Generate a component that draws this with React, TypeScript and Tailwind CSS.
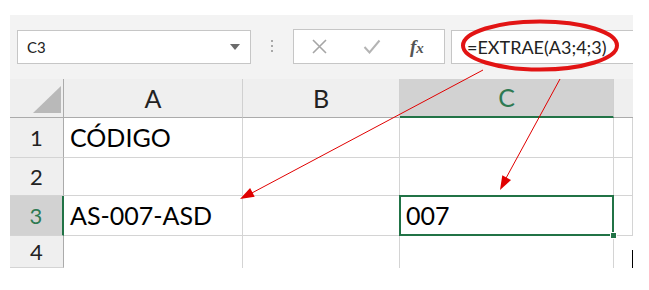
import React from "react";

const line = "border-[#d4d4d4]";

function Cell({ children, className = "" }: { children?: React.ReactNode; className?: string }) {
  return (
    <div className={`border-r border-b ${line} bg-white flex items-center pl-[6px] text-[25px] text-black leading-none ${className}`}>
      {children}
    </div>
  );
}

function RowHead({ n, active = false }: { n: number; active?: boolean }) {
  return (
    <div
      className={`flex items-center justify-center text-[22px] leading-none border-b border-[#d4d4d4] ${
        active
          ? "bg-[#d2d2d2] text-[#2e7a52] border-r-2 border-r-[#217346]"
          : "bg-[#efefef] text-[#222] border-r border-r-[#ababab]"
      }`}
    >
      {n}
    </div>
  );
}

export default function App() {
  return (
    <div
      className="relative w-[649px] h-[290px] bg-white overflow-hidden pl-[10px] pt-[15px]"
      style={{ fontFamily: "Lato, 'Open Sans', sans-serif" }}
    >
      <div className="w-[623px]">
        {/* formula bar */}
        <div className="h-[64px] bg-[#f3f3f3] flex items-start pt-[15px] pl-[7px]">
          <div className="w-[234px] h-[34px] bg-white border border-[#c6c6c6] flex items-center justify-between pl-[9px] pr-[10px]">
            <span className="text-[15px] text-[#222]">C3</span>
            <svg width="10" height="6" viewBox="0 0 10 6">
              <path d="M0 0 L10 0 L5 6 Z" fill="#6b6b6b" />
            </svg>
          </div>
          <div className="ml-[20px] mt-[10px] flex flex-col gap-[3px]">
            <span className="w-[2px] h-[2px] bg-[#a8a8a8]" />
            <span className="w-[2px] h-[2px] bg-[#a8a8a8]" />
            <span className="w-[2px] h-[2px] bg-[#a8a8a8]" />
          </div>
          <div className="ml-[20px] -mt-[1px] w-[152px] h-[35px] bg-white border border-[#c6c6c6] flex items-center">
            <svg className="ml-[18px]" width="15" height="15" viewBox="0 0 15 15">
              <path d="M1 1 L14 14 M14 1 L1 14" stroke="#a6a6a6" strokeWidth="1.6" />
            </svg>
            <svg className="ml-[36px]" width="18" height="15" viewBox="0 0 18 15">
              <path d="M1.5 8 L6.5 13.5 L16.5 1.5" stroke="#b4b4b4" strokeWidth="2" fill="none" />
            </svg>
            <span
              className="ml-[29px] italic font-bold text-[#555] text-[19px] leading-none"
              style={{ fontFamily: "'Liberation Serif', serif" }}
            >
              f<span className="text-[15px]">x</span>
            </span>
          </div>
          <div className="ml-[6px] flex-1 h-[34px] bg-white border-y border-l border-[#c6c6c6] flex items-center pl-[15px]">
            <span className="text-[18px] text-[#222]">=EXTRAE(A3;4;3)</span>
          </div>
        </div>

        {/* sheet grid */}
        <div className="grid grid-cols-[54px_179px_157px_214px_19px] grid-rows-[39px_40px_38px_40px_32px]">
          <div className="bg-[#efefef] border-r border-b border-[#ababab] relative">
            <svg className="absolute left-[23px] top-[7px]" width="28" height="27" viewBox="0 0 28 27">
              <path d="M28 0 L28 27 L0 27 Z" fill="#b9b9b9" />
            </svg>
          </div>
          <div className="bg-[#efefef] border-r border-r-[#d0d0d0] border-b border-b-[#ababab] flex items-center justify-center text-[25px] text-[#222] leading-none">
            A
          </div>
          <div className="bg-[#efefef] border-r border-r-[#d0d0d0] border-b border-b-[#ababab] flex items-center justify-center text-[25px] text-[#222] leading-none">
            B
          </div>
          <div className="bg-[#d2d2d2] border-r border-r-[#d0d0d0] border-b-2 border-b-[#217346] flex items-center justify-center text-[25px] text-[#2e7a52] leading-none">
            C
          </div>
          <div className="bg-[#efefef] border-b border-b-[#ababab]" />

          <RowHead n={1} />
          <Cell>CÓDIGO</Cell>
          <Cell />
          <Cell />
          <Cell />

          <RowHead n={2} />
          <Cell />
          <Cell />
          <Cell />
          <Cell />

          <RowHead n={3} active />
          <Cell>AS-007-ASD</Cell>
          <Cell />
          <Cell className="relative">
            007
            <div className="absolute -top-[1px] -left-[1px] -right-[1px] -bottom-[1px] border-2 border-[#217346]" />
            <div className="absolute -right-[4px] -bottom-[4px] w-[7px] h-[7px] bg-[#217346] border border-white" />
          </Cell>
          <Cell />

          <RowHead n={4} />
          <div className={`border-r ${line} bg-white`} />
          <div className={`border-r ${line} bg-white`} />
          <div className={`border-r ${line} bg-white`} />
          <div className="bg-white" />
        </div>
      </div>

      {/* annotations */}
      <svg className="absolute left-0 top-0 pointer-events-none" width="649" height="290" viewBox="0 0 649 290">
        <ellipse cx="540" cy="45.5" rx="77" ry="24" fill="none" stroke="#e21414" strokeWidth="4" />
        <line x1="483" y1="70" x2="250" y2="194" stroke="#e00000" strokeWidth="1" />
        <polygon points="240,199 254.7,196.8 250.1,188" fill="#e00000" />
        <line x1="560" y1="79" x2="505" y2="180" stroke="#e00000" strokeWidth="1" />
        <polygon points="500,190 511.1,180.1 502.3,175.3" fill="#e00000" />
        <line x1="632.5" y1="250" x2="632.5" y2="268" stroke="#000" strokeWidth="1" />
      </svg>
    </div>
  );
}
